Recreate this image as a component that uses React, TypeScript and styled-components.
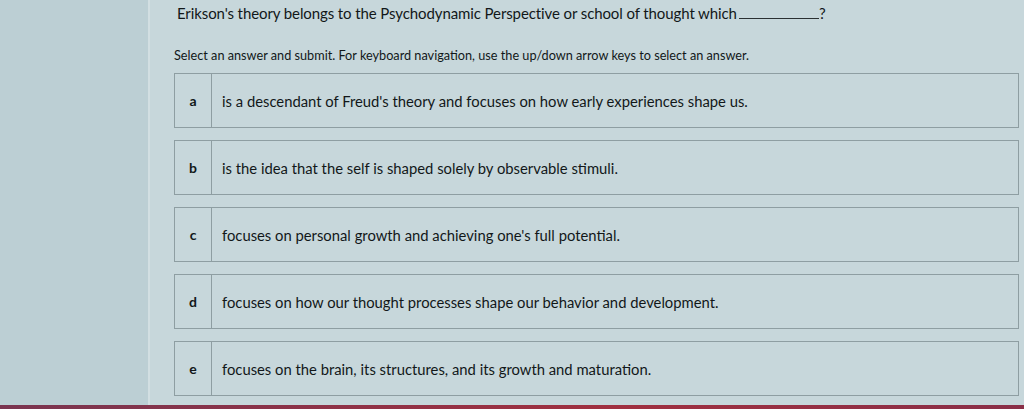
import { createGlobalStyle } from "styled-components"
import styled from "styled-components"

const GlobalStyle = createGlobalStyle`
  html, body {
    margin: 0;
    padding: 0;
    background: #c3d4d8;
  }
  body {
    font-family: Lato, "Liberation Sans", sans-serif;
    color: #121719;
    overflow: hidden;
  }
`

const Page = styled.div`
  display: flex;
  width: 1024px;
  height: 409px;
  position: relative;
`

const Sidebar = styled.div`
  width: 148px;
  flex-shrink: 0;
  background: #bccfd4;
`

const Main = styled.div`
  flex: 1;
  border-left: 2px solid #d2dfe2;
  background: #c7d7db;
  padding: 4px 5px 0 24px;
  box-sizing: border-box;
`

const Question = styled.h1`
  font-size: 15px;
  font-weight: 400;
  margin: 0;
  line-height: 18px;
  letter-spacing: -0.1px;
  padding-left: 3px;
`

const Blank = styled.span`
  display: inline-block;
  width: 80px;
  border-bottom: 1px solid #2a3032;
  margin-left: 2px;
  vertical-align: baseline;
`

const Instructions = styled.p`
  font-size: 12.7px;
  margin: 26px 0 0 0;
  line-height: 15px;
`

const OptionList = styled.ul`
  list-style: none;
  margin: 10px 0 0 0;
  padding: 0;
  display: flex;
  flex-direction: column;
  gap: 12px;
`

const Option = styled.li`
  display: flex;
  height: 55px;
  box-sizing: border-box;
  border: 1.5px solid #8e9ea2;
  width: 845px;
`

const Letter = styled.div`
  width: 36px;
  flex-shrink: 0;
  border-right: 1.5px solid #8e9ea2;
  display: flex;
  align-items: center;
  justify-content: center;
  font-size: 14px;
  font-weight: 700;
`

const OptionText = styled.div`
  display: flex;
  align-items: center;
  padding-left: 10px;
  font-size: 14.8px;
`

const BottomBar = styled.div`
  position: absolute;
  left: 0;
  right: 0;
  bottom: 0;
  height: 4px;
  background: linear-gradient(90deg, #7a3550, #a03040 60%, #8a2f48);
`

const options = [
  { key: "a", text: "is a descendant of Freud's theory and focuses on how early experiences shape us." },
  { key: "b", text: "is the idea that the self is shaped solely by observable stimuli." },
  { key: "c", text: "focuses on personal growth and achieving one's full potential." },
  { key: "d", text: "focuses on how our thought processes shape our behavior and development." },
  { key: "e", text: "focuses on the brain, its structures, and its growth and maturation." },
]

const App = () => {
  return (
    <>
      <GlobalStyle />
      <Page>
        <Sidebar />
        <Main>
          <Question>
            Erikson's theory belongs to the Psychodynamic Perspective or school of thought which
            <Blank />?
          </Question>
          <Instructions>
            Select an answer and submit. For keyboard navigation, use the up/down arrow keys to select an answer.
          </Instructions>
          <OptionList>
            {options.map(opt => (
              <Option key={opt.key}>
                <Letter>{opt.key}</Letter>
                <OptionText>{opt.text}</OptionText>
              </Option>
            ))}
          </OptionList>
        </Main>
        <BottomBar />
      </Page>
    </>
  )
}

export default App
